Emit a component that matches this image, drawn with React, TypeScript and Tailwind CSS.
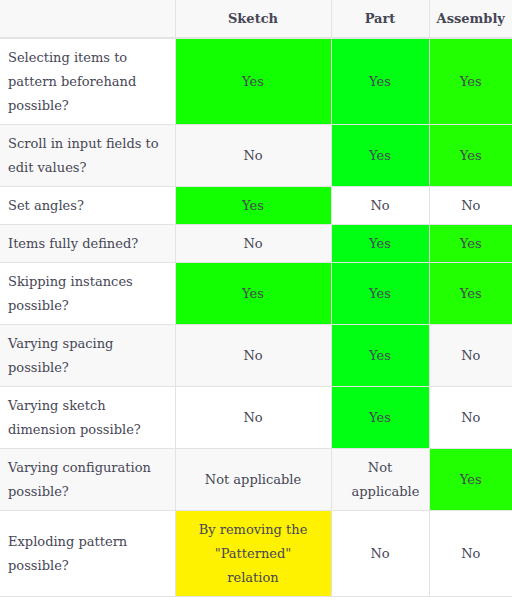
const SK = 'bg-[#11ff00]';
const PA = 'bg-[#00ff12]';
const AS = 'bg-[#22ff00]';
const YE = 'bg-[#fff200]';

type Cell = { text: string; bg?: string };
type Row = { label: string; cells: Cell[] };

const rows: Row[] = [
  {
    label: 'Selecting items to pattern beforehand possible?',
    cells: [{ text: 'Yes', bg: SK }, { text: 'Yes', bg: PA }, { text: 'Yes', bg: AS }],
  },
  {
    label: 'Scroll in input fields to edit values?',
    cells: [{ text: 'No' }, { text: 'Yes', bg: PA }, { text: 'Yes', bg: AS }],
  },
  {
    label: 'Set angles?',
    cells: [{ text: 'Yes', bg: SK }, { text: 'No' }, { text: 'No' }],
  },
  {
    label: 'Items fully defined?',
    cells: [{ text: 'No' }, { text: 'Yes', bg: PA }, { text: 'Yes', bg: AS }],
  },
  {
    label: 'Skipping instances possible?',
    cells: [{ text: 'Yes', bg: SK }, { text: 'Yes', bg: PA }, { text: 'Yes', bg: AS }],
  },
  {
    label: 'Varying spacing possible?',
    cells: [{ text: 'No' }, { text: 'Yes', bg: PA }, { text: 'No' }],
  },
  {
    label: 'Varying sketch dimension possible?',
    cells: [{ text: 'No' }, { text: 'Yes', bg: PA }, { text: 'No' }],
  },
  {
    label: 'Varying configuration possible?',
    cells: [{ text: 'Not applicable' }, { text: 'Not applicable' }, { text: 'Yes', bg: AS }],
  },
  {
    label: 'Exploding pattern possible?',
    cells: [{ text: 'By removing the "Patterned" relation', bg: YE }, { text: 'No' }, { text: 'No' }],
  },
];

export default function App() {
  return (
    <div className="w-[512px] h-[600px] overflow-hidden bg-white font-['DejaVu_Serif',serif] text-[13px] leading-[24px] text-[#464655]">
      <table className="w-[512px] table-fixed border-collapse">
        <colgroup>
          <col className="w-[175px]" />
          <col className="w-[156px]" />
          <col className="w-[98px]" />
          <col className="w-[83px]" />
        </colgroup>
        <thead>
          <tr className="bg-[#f8f8f8]">
            <th className="border-b-2 border-[#e3e3e3] py-[6.5px]" />
            <th className="border-b-2 border-l border-[#e3e3e3] py-[6.5px] text-center font-bold">Sketch</th>
            <th className="border-b-2 border-l border-[#e3e3e3] py-[6.5px] text-center font-bold">Part</th>
            <th className="border-b-2 border-l border-[#e3e3e3] py-[6.5px] text-center font-bold">Assembly</th>
          </tr>
        </thead>
        <tbody>
          {rows.map((r, i) => (
            <tr key={i} className={i % 2 === 1 ? 'bg-[#f8f8f8]' : 'bg-white'}>
              <td className="border-b border-[#e3e3e3] py-[6.5px] pl-2 pr-2 text-left align-middle">{r.label}</td>
              {r.cells.map((c, j) => (
                <td
                  key={j}
                  className={`border-b border-l border-[#e3e3e3] px-5 py-[6.5px] text-center align-middle ${c.bg ?? ''}`}
                >
                  {c.text}
                </td>
              ))}
            </tr>
          ))}
        </tbody>
      </table>
    </div>
  );
}
